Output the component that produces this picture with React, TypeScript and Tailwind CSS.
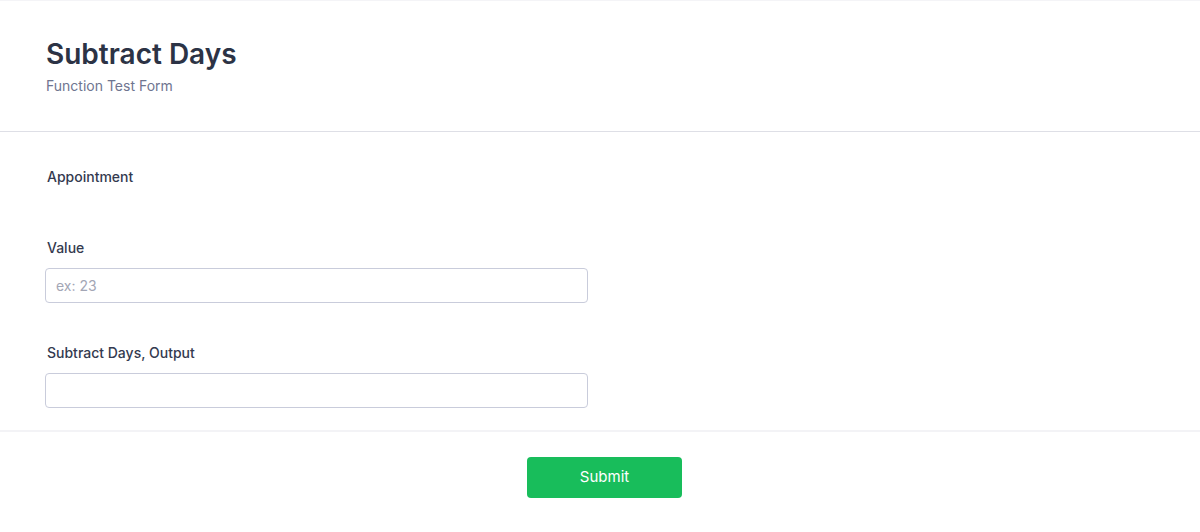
import React from 'react';

const Field: React.FC<{ label: string; placeholder?: string; className?: string }> = ({ label, placeholder, className }) => (
    <div className={className}>
        <label className="block pl-[2px] text-[14px] leading-[20px] font-medium text-[#343a4f]">{label}</label>
        <input
            type="text"
            placeholder={placeholder}
            className="mt-[10px] block w-[543px] h-[35px] px-[10px] border border-[#c9ccdb] rounded-[4px] text-[14px] text-[#2c3345] placeholder:text-[#a3a6b5] bg-white outline-none"
        />
    </div>
);

const App: React.FC = () => {
    return (
        <div className="w-full h-[532px] bg-white overflow-hidden" style={{ fontFamily: 'Inter, "Noto Sans", sans-serif' }}>
            {/* Header */}
            <div className="h-[132px] border-t border-b border-t-[#f4f4f7] border-b-[#dedfe6] pl-[46px] pt-[36px]">
                <h1 className="text-[28px] leading-[34px] font-semibold text-[#2c3345]">Subtract Days</h1>
                <p className="mt-[5px] text-[14px] leading-[20px] text-[#6f7590]">Function Test Form</p>
            </div>

            {/* Body */}
            <div className="h-[298px] pl-[45px] pt-[35px]">
                <div className="pl-[2px] text-[14px] leading-[20px] font-medium text-[#343a4f]">Appointment</div>
                <Field label="Value" placeholder="ex: 23" className="mt-[51px]" />
                <Field label="Subtract Days, Output" className="mt-[40px]" />
            </div>

            {/* Footer */}
            <div className="border-t-2 border-[#f3f3f6] flex justify-center pl-[9px] pt-[25px]">
                <button
                    type="button"
                    className="w-[155px] h-[41px] rounded-[4px] bg-[#18bd5b] text-white text-[15px] font-normal"
                >
                    Submit
                </button>
            </div>
        </div>
    );
};

export default App;
